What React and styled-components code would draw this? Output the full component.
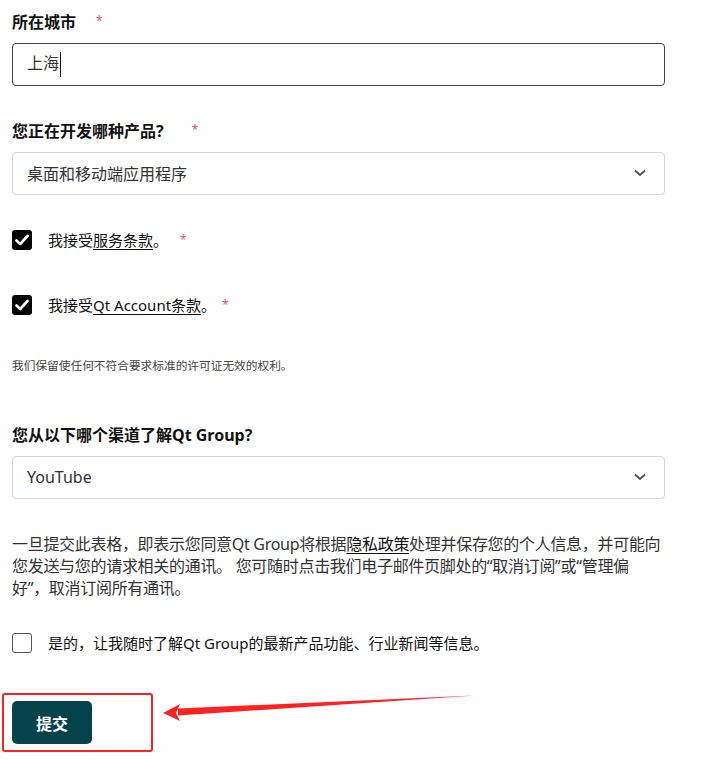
import React from "react";
import styled, { createGlobalStyle } from "styled-components";

const GlobalStyle = createGlobalStyle`
  body {
    margin: 0;
    background: #fff;
    font-family: "Noto Sans", "Noto Sans CJK SC", sans-serif;
    color: #111;
  }
`;

const Page = styled.div`
  position: relative;
  width: 703px;
  height: 772px;
  box-sizing: border-box;
  padding: 11px 38px 0 12px;
  overflow: hidden;
`;

const Label = styled.div`
  font-size: 16px;
  font-weight: 700;
  line-height: 22px;
  margin-top: ${(p) => p.top || 0}px;
  display: flex;
  align-items: flex-start;
`;

const Star = styled.span`
  color: #e8506c;
  font-size: 12px;
  font-weight: 400;
  line-height: 20px;
  margin-left: ${(p) => p.gap || 12}px;
`;

const Field = styled.div`
  margin-top: 10px;
  height: 43px;
  box-sizing: border-box;
  border: 1px solid ${(p) => (p.active ? "#444" : "#d6d6d6")};
  border-radius: 4px;
  padding: 0 14px 2px;
  display: flex;
  align-items: center;
  justify-content: space-between;
  font-size: 16px;
  color: #333;
`;

const Caret = styled.span`
  display: inline-block;
  width: 1px;
  height: 25px;
  background: #111;
  margin-left: 1px;
  vertical-align: middle;
`;

const Chevron = () => (
  <svg width="12" height="8" viewBox="0 0 12 8" style={{ marginRight: 4 }}>
    <path d="M1 1.5 L6 6 L11 1.5" fill="none" stroke="#555" strokeWidth="1.8" />
  </svg>
);

const CheckRow = styled.label`
  display: flex;
  align-items: center;
  margin-top: ${(p) => p.top || 0}px;
  font-size: 15px;
  line-height: 20px;
  color: #111;
`;

const Box = styled.span`
  width: 20px;
  height: 20px;
  box-sizing: border-box;
  border-radius: 3px;
  flex: none;
  display: flex;
  align-items: center;
  justify-content: center;
  background: ${(p) => (p.checked ? "#000" : "#fff")};
  border: ${(p) => (p.checked ? "none" : "1.5px solid #555")};
  margin-right: 16px;
`;

const RowText = styled.span`
  display: flex;
  align-items: flex-start;
`;

const Link = styled.a`
  color: #111;
  text-decoration: underline;
  text-underline-offset: 3px;
`;

const Small = styled.p`
  margin: 41px 0 0;
  font-size: 11.7px;
  line-height: 18px;
  color: #444;
`;

const Para = styled.p`
  margin: 34px 0 0;
  font-size: 16px;
  line-height: 22px;
  letter-spacing: -0.3px;
  color: #333;
`;

const Button = styled.button`
  margin-top: 48px;
  width: 80px;
  height: 43px;
  border: none;
  border-radius: 5px;
  background: #05434a;
  color: #fff;
  font-family: inherit;
  font-size: 16px;
  font-weight: 700;
`;

const Highlight = styled.div`
  position: absolute;
  left: 2px;
  top: 693px;
  width: 151px;
  height: 59px;
  box-sizing: border-box;
  border: 2px solid #f22;
  border-radius: 3px;
`;

const ArrowLayer = styled.svg`
  position: absolute;
  left: 0;
  top: 0;
  pointer-events: none;
`;

const Check = () => (
  <svg width="14" height="12" viewBox="0 0 14 12">
    <path d="M1.5 6.5 L5.2 10 L12.5 2" fill="none" stroke="#fff" strokeWidth="2.6" strokeLinecap="round" strokeLinejoin="round" />
  </svg>
);

export default function App() {
  return (
    <>
      <GlobalStyle />
      <Page>
        <Label>
          所在城市<Star gap={20}>*</Star>
        </Label>
        <Field active>
          <span>
            上海<Caret />
          </span>
        </Field>

        <Label top={34}>
          您正在开发哪种产品?<Star gap={28}>*</Star>
        </Label>
        <Field>
          <span>桌面和移动端应用程序</span>
          <Chevron />
        </Field>

        <CheckRow top={35}>
          <Box checked>
            <Check />
          </Box>
          <RowText>
            我接受<Link>服务条款</Link>。<Star gap={12}>*</Star>
          </RowText>
        </CheckRow>

        <CheckRow top={45}>
          <Box checked>
            <Check />
          </Box>
          <RowText>
            我接受<Link>Qt Account条款</Link>。<Star gap={6}>*</Star>
          </RowText>
        </CheckRow>

        <Small>我们保留使任何不符合要求标准的许可证无效的权利。</Small>

        <Label top={50}>您从以下哪个渠道了解Qt Group?</Label>
        <Field>
          <span>YouTube</span>
          <Chevron />
        </Field>

        <Para>
          一旦提交此表格，即表示您同意Qt Group将根据<Link>隐私政策</Link>处理并保存您的个人信息，并可能向您发送与您的请求相关的通讯。 您可随时点击我们电子邮件页脚处的“取消订阅”或“管理偏<br />好”，取消订阅所有通讯。
        </Para>

        <CheckRow top={34}>
          <Box />
          <RowText>是的，让我随时了解Qt Group的最新产品功能、行业新闻等信息。</RowText>
        </CheckRow>

        <Button>提交</Button>

        <Highlight />
        <ArrowLayer width="703" height="772" viewBox="0 0 703 772">
          <path d="M475 695.5 L178 708.5 L178 715.5 Z" fill="#f22" />
          <path d="M163 713 L180 704 L176 713 L180 721 Z" fill="#f22" />
        </ArrowLayer>
      </Page>
    </>
  );
}
